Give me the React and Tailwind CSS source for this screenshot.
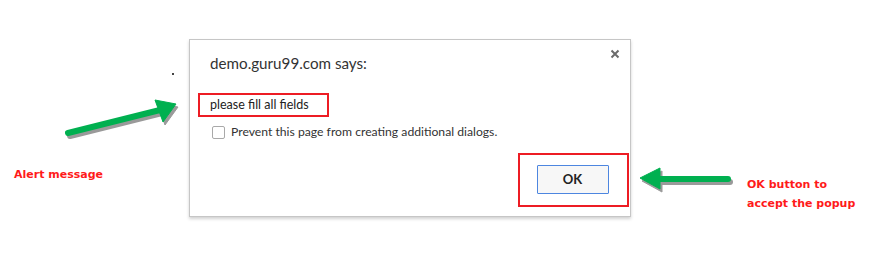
export default function App() {
  return (
    <div className="relative w-[873px] h-[268px] bg-white overflow-hidden font-['Lato',sans-serif]">
      {/* Dialog */}
      <div className="pt-[39px] pl-[189px]">
        <div className="relative w-[442px] h-[178px] bg-white border border-[#c6c6c6] shadow-[0_2px_3px_rgba(0,0,0,0.18)]">
          <button className="absolute right-[10px] top-[9px] text-[#6b6b6b]">
            <svg width="10" height="10" viewBox="0 0 10 10">
              <path d="M1.5 1.5 L8.5 8.5 M8.5 1.5 L1.5 8.5" stroke="currentColor" strokeWidth="2" />
            </svg>
          </button>

          <div className="pl-[20px] pt-[12px] text-[15.2px] leading-[22px] text-[#333]">
            demo.guru99.com says:
          </div>

          <div className="mt-[19px] ml-[8px] flex">
            <div className="border-2 border-[#ed1c24] pl-[10px] pr-[18px] h-[24px] text-[12.5px] leading-[20px] text-[#222]">
              please fill all fields
            </div>
          </div>

          <label className="mt-[7px] ml-[22px] flex items-center gap-[6px] text-[12.2px] leading-[16px] text-[#333]">
            <span className="w-[13px] h-[13px] border border-[#a9a9a9] rounded-[2px] bg-white"></span>
            Prevent this page from creating additional dialogs.
          </label>

          <div className="mt-[13px] mr-[1px] flex justify-end">
            <div className="border-2 border-[#ed1c24] w-[111px] h-[54px] flex items-center justify-center">
              <button className="w-[72px] h-[29px] border border-[#4d86e0] rounded-[1px] bg-[#f7f7f7] text-[13px] font-bold text-[#222] -ml-[2px] -mt-[1px]">
                OK
              </button>
            </div>
          </div>
        </div>
      </div>

      {/* stray dot */}
      <div className="absolute left-[172px] top-[73px] w-[2px] h-[2px] bg-[#444]"></div>

      {/* Arrows */}
      <svg className="absolute left-0 top-0" width="873" height="268" viewBox="0 0 873 268">
        <g transform="translate(2,3)" fill="#9a9a9a" stroke="#9a9a9a">
          <line x1="68" y1="133" x2="160" y2="110" strokeWidth="6" strokeLinecap="round" />
          <polygon points="176,104 155,100 163,122" strokeWidth="1" />
        </g>
        <g fill="#00b050" stroke="#00b050">
          <line x1="68" y1="133" x2="160" y2="110" strokeWidth="6" strokeLinecap="round" />
          <polygon points="176,104 155,100 163,122" strokeWidth="1" />
        </g>

        <g transform="translate(2,3)" fill="#9a9a9a" stroke="#9a9a9a">
          <line x1="656" y1="179" x2="728" y2="179" strokeWidth="6" strokeLinecap="round" />
          <polygon points="640,178 660,168 660,189" strokeWidth="1" />
        </g>
        <g fill="#00b050" stroke="#00b050">
          <line x1="656" y1="179" x2="728" y2="179" strokeWidth="6" strokeLinecap="round" />
          <polygon points="640,178 660,168 660,189" strokeWidth="1" />
        </g>
      </svg>

      {/* Labels */}
      <div className="absolute left-[14px] top-[167px] text-[11px] leading-[16px] font-bold text-[#ff1a1a] font-['DejaVu_Sans',sans-serif]">
        Alert message
      </div>
      <div className="absolute left-[747px] top-[175px] text-[11px] leading-[19px] font-bold text-[#ff1a1a] font-['DejaVu_Sans',sans-serif]">
        OK button to
        <br />
        accept the popup
      </div>
    </div>
  )
}
